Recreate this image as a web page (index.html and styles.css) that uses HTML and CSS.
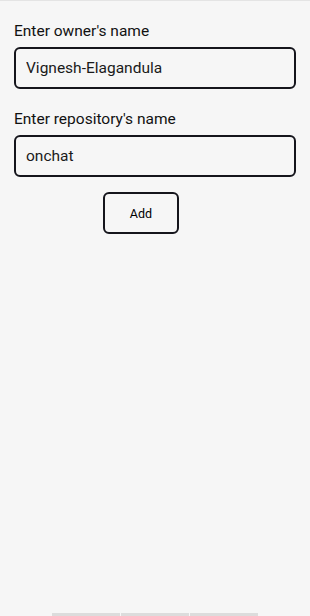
FILE: index.html
```html
<!DOCTYPE html>
<html lang="en">

<head>
	<meta charset="UTF-8">
	<title>Add repository</title>
	<link rel="stylesheet" href="styles.css">
</head>

<body>
	<main class="form">
		<label class="field-label" for="owner">Enter owner's name</label>
		<input class="field-input" id="owner" type="text" value="Vignesh-Elagandula">

		<label class="field-label" for="repo">Enter repository's name</label>
		<input class="field-input" id="repo" type="text" value="onchat">

		<button class="add-btn">Add</button>
	</main>

	<footer class="nav-bar">
		<span class="nav-seg"></span>
		<span class="nav-seg"></span>
		<span class="nav-seg"></span>
	</footer>
</body>

</html>
```
FILE: styles.css
```css
html,
body {
	height: 100%;
}

body {
	margin: 0;
	padding: 0;
	background-color: #f6f6f6;
	border-top: 1px solid #e4e4e4;
	box-sizing: border-box;
	font-family: Roboto, "Liberation Sans", sans-serif;
	color: #111;
	display: flex;
	flex-direction: column;
}

.form {
	display: flex;
	flex-direction: column;
	align-items: flex-start;
	padding: 21px 14px 0;
}

.field-label {
	font-size: 15.5px;
	line-height: 19px;
	margin-bottom: 6px;
}

.field-input {
	box-sizing: border-box;
	width: 282px;
	height: 42px;
	margin: 0 0 21px;
	padding: 0 10px;
	border: 2px solid #15151c;
	border-radius: 6px;
	background-color: #f6f6f6;
	font-family: Roboto, "Liberation Sans", sans-serif;
	font-size: 15.5px;
	color: #1a1a1a;
	outline: none;
}

.form .field-input:last-of-type {
	margin-bottom: 15px;
}

.add-btn {
	box-sizing: border-box;
	width: 76px;
	height: 42px;
	margin-left: 89px;
	border: 2px solid #15151c;
	border-radius: 6px;
	background-color: #f6f6f6;
	font-family: Roboto, "Liberation Sans", sans-serif;
	font-size: 12.5px;
	font-weight: 400;
	color: #000;
}

.nav-bar {
	margin-top: auto;
	display: flex;
	justify-content: center;
	gap: 1px;
	height: 3px;
}

.nav-seg {
	width: 68px;
	background-color: #dcdcdc;
}
```
